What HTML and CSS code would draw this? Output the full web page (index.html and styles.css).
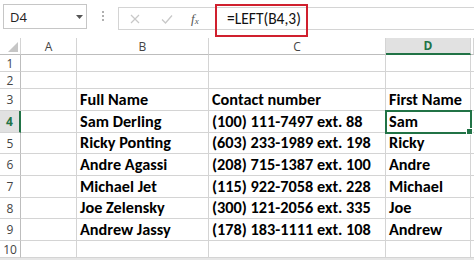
FILE: index.html
```html
<!DOCTYPE html>
<html>
<head>
<meta charset="utf-8">
<link rel="stylesheet" href="styles.css">
</head>
<body>
<div class="app">
  <div class="toolbar">
    <div class="namebox">
      <span class="name">D4</span>
      <svg class="caret" width="7" height="4" viewBox="0 0 7 4"><path d="M0 0h7L3.5 4z" fill="#555"/></svg>
    </div>
    <div class="grip"><i></i><i></i><i></i></div>
    <div class="fxbox">
      <svg class="ico" width="10" height="10" viewBox="0 0 10 10"><path d="M1 1L9 9M9 1L1 9" stroke="#c8c8c8" stroke-width="1.2" fill="none"/></svg>
      <svg class="ico" width="12" height="10" viewBox="0 0 12 10"><path d="M1 5.5L4.5 9L11 1.5" stroke="#c8c8c8" stroke-width="1.3" fill="none"/></svg>
      <span class="fx">f<sub>x</sub></span>
    </div>
    <div class="formula">
      <span class="ftext">=LEFT(B4,3)</span>
      <div class="hl"></div>
    </div>
  </div>
  <div class="sheet">
    <div class="corner"><svg width="10" height="10" viewBox="0 0 10 10"><path d="M10 0V10H0z" fill="#c6c6c6"/></svg></div>
    <div class="ch">A</div><div class="ch">B</div><div class="ch">C</div><div class="ch sel">D</div><div class="ch last"></div>

    <div class="rh">1</div><div class="c"></div><div class="c"></div><div class="c"></div><div class="c"></div><div class="c last"></div>
    <div class="rh">2</div><div class="c"></div><div class="c"></div><div class="c"></div><div class="c"></div><div class="c last"></div>
    <div class="rh">3</div><div class="c"></div><div class="c">Full Name</div><div class="c">Contact number</div><div class="c">First Name</div><div class="c last"></div>
    <div class="rh sel">4</div><div class="c"></div><div class="c">Sam Derling</div><div class="c">(100) 111-7497 ext. 88</div><div class="c active">Sam<span class="handle"></span></div><div class="c last"></div>
    <div class="rh">5</div><div class="c"></div><div class="c">Ricky Ponting</div><div class="c">(603) 233-1989 ext. 198</div><div class="c">Ricky</div><div class="c last"></div>
    <div class="rh">6</div><div class="c"></div><div class="c">Andre Agassi</div><div class="c">(208) 715-1387 ext. 100</div><div class="c">Andre</div><div class="c last"></div>
    <div class="rh">7</div><div class="c"></div><div class="c">Michael Jet</div><div class="c">(115) 922-7058 ext. 228</div><div class="c">Michael</div><div class="c last"></div>
    <div class="rh">8</div><div class="c"></div><div class="c">Joe Zelensky</div><div class="c">(300) 121-2056 ext. 335</div><div class="c">Joe</div><div class="c last"></div>
    <div class="rh">9</div><div class="c"></div><div class="c">Andrew Jassy</div><div class="c">(178) 183-1111 ext. 108</div><div class="c">Andrew</div><div class="c last"></div>
    <div class="rh">10</div><div class="c"></div><div class="c"></div><div class="c"></div><div class="c"></div><div class="c last"></div>
  </div>
</div>
</body>
</html>
```

FILE: styles.css
```css
html, body {
  margin: 0;
  padding: 0;
  background: #fff;
}
.app {
  width: 474px;
  height: 260px;
  overflow: hidden;
  font-family: "Segoe UI", "Open Sans", "DejaVu Sans", sans-serif;
  background: #fff;
}
.toolbar {
  height: 38px;
  display: flex;
  align-items: flex-start;
  position: relative;
}
.namebox {
  margin: 4px 0 0 3px;
  width: 84px;
  height: 25px;
  box-sizing: border-box;
  border: 1px solid #c6c6c6;
  display: flex;
  align-items: center;
  justify-content: space-between;
  padding: 0 3px 0 6px;
  font-size: 13px;
  color: #222;
}
.caret { margin-top: 1px; }
.grip {
  width: 31px;
  height: 29px;
  display: flex;
  flex-direction: column;
  align-items: center;
  justify-content: center;
  gap: 2px;
  padding-top: 1px;
}
.grip i {
  display: block;
  width: 2px;
  height: 2px;
  background: #b0b0b0;
}
.fxbox {
  margin-top: 7px;
  width: 97px;
  height: 23px;
  box-sizing: border-box;
  border: 1px solid #d4d4d4;
  border-right: none;
  display: flex;
  align-items: center;
  padding-left: 11px;
  gap: 21px;
}
.fx {
  font-family: "Liberation Serif", "DejaVu Serif", serif;
  font-style: italic;
  font-size: 13px;
  color: #555;
  margin-left: -3px;
}
.fx sub {
  font-size: 9px;
  vertical-align: -1px;
}
.formula {
  flex: 1;
  margin-top: 7px;
  height: 23px;
  box-sizing: border-box;
  border-top: 1px solid #d4d4d4;
  border-bottom: 1px solid #d4d4d4;
  border-left: 1px solid #d4d4d4;
  display: flex;
  align-items: center;
  padding-left: 11px;
  position: relative;
  font-family: Carlito, Lato, "Liberation Sans", sans-serif;
  font-size: 15.5px;
  color: #111;
}
.hl {
  position: absolute;
  left: -1px;
  top: -4px;
  width: 93px;
  height: 33px;
  box-sizing: border-box;
  border: 2px solid #d0202e;
}
.sheet {
  display: grid;
  grid-template-columns: 21px 56px 132px 177px 85px 1fr;
  grid-template-rows: 17px 17px 17px 22px 22px 21px 22px 22px 21px 22px 17px;
  border-bottom: 2px solid #e6e6e6;
}
.corner {
  border-right: 1px solid #d4d4d4;
  border-bottom: 1px solid #bdbdbd;
  display: flex;
  align-items: flex-end;
  justify-content: flex-end;
  padding: 0 2px 2px 0;
  background: #fff;
}
.ch {
  border-right: 1px solid #d4d4d4;
  border-bottom: 1px solid #bdbdbd;
  display: flex;
  align-items: center;
  justify-content: center;
  font-size: 12px;
  color: #444;
  background: #fff;
}
.ch.sel {
  background: #e1e1e1;
  color: #217346;
  font-weight: bold;
  border-bottom: 2px solid #217346;
}
.rh {
  border-right: 1px solid #bdbdbd;
  border-bottom: 1px solid #d4d4d4;
  display: flex;
  align-items: center;
  justify-content: center;
  font-size: 12px;
  color: #444;
  background: #fff;
}
.rh.sel {
  background: #e1e1e1;
  color: #217346;
  font-weight: bold;
  border-right: 2px solid #217346;
}
.c {
  border-right: 1px solid #d4d4d4;
  border-bottom: 1px solid #d4d4d4;
  display: flex;
  align-items: flex-end;
  padding: 0 0 1px 3px;
  font-family: Carlito, Lato, "Liberation Sans", sans-serif;
  font-weight: bold;
  font-size: 16.3px;
  line-height: 19px;
  color: #000;
  white-space: nowrap;
  overflow: visible;
  position: relative;
}
.c.last { border-right: none; }
.c.active {
  outline: 2px solid #217346;
  outline-offset: -1px;
  z-index: 1;
}
.handle {
  position: absolute;
  right: -3px;
  bottom: -3px;
  width: 5px;
  height: 5px;
  background: #217346;
  border: 1px solid #fff;
}
```
